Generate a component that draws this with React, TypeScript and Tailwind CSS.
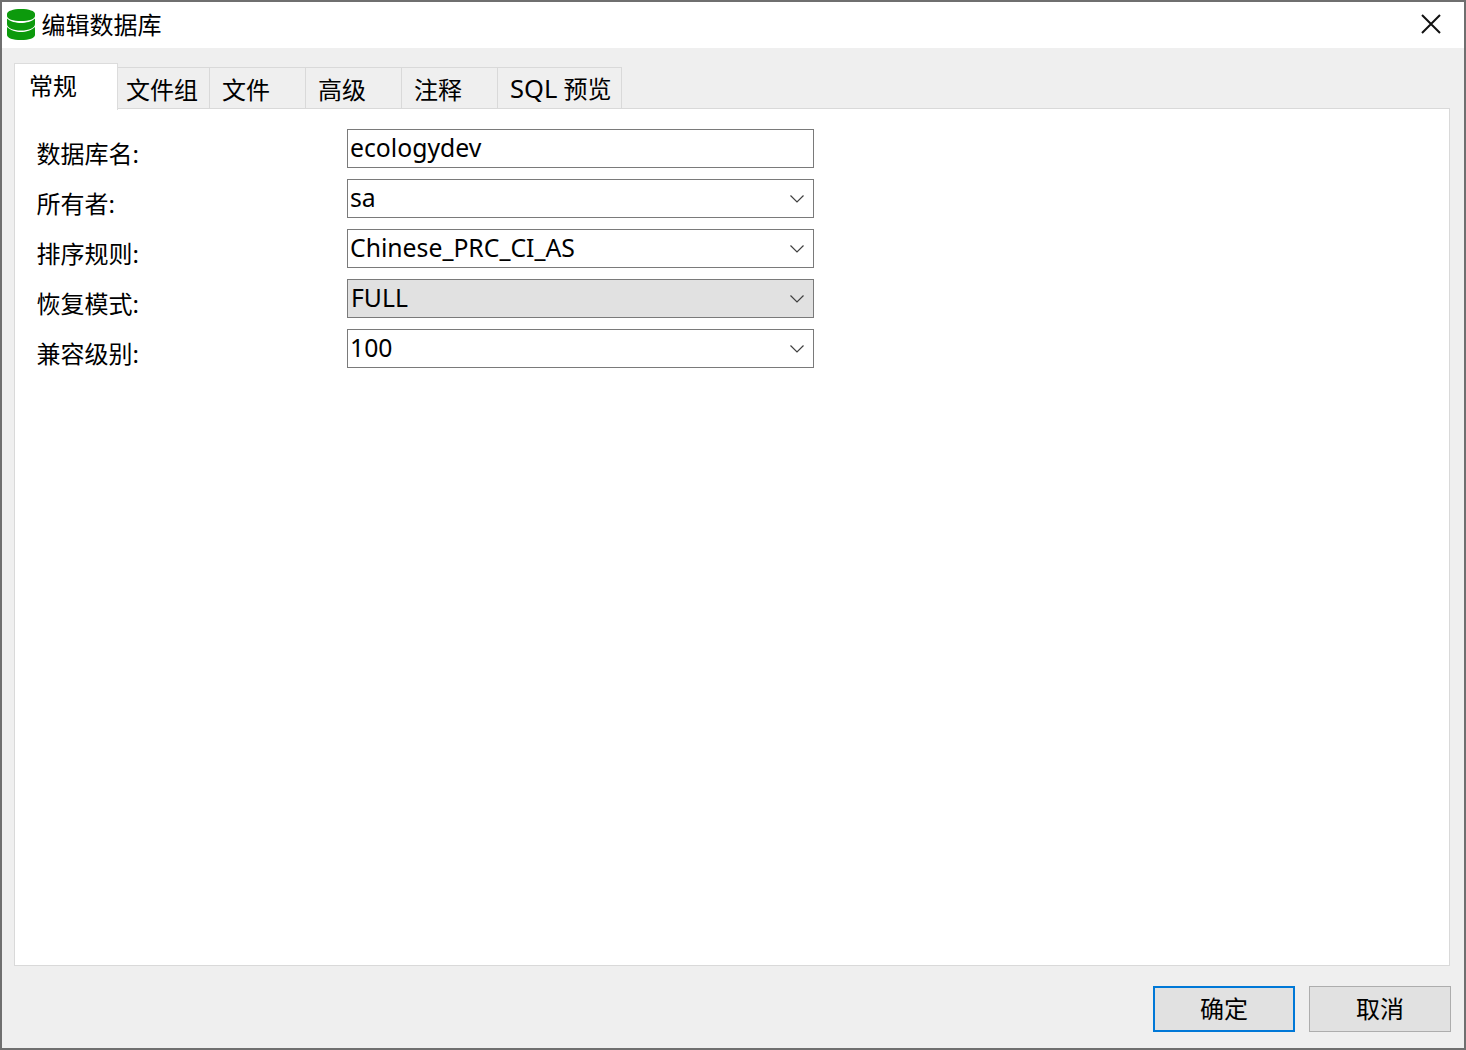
import React from "react";

const font = "font-['Noto_Sans','Noto_Sans_CJK_SC',sans-serif]";

const tabs = [
  { label: "文件组", w: "w-[92px]", pl: "pl-[8px]" },
  { label: "文件", w: "w-[96px]", pl: "pl-[12px]" },
  { label: "高级", w: "w-[96px]", pl: "pl-[12px]" },
  { label: "注释", w: "w-[96px]", pl: "pl-[12px]" },
];

const Chevron = () => (
  <svg width="16" height="10" viewBox="0 0 16 10" className="shrink-0" fill="none" stroke="#404040" strokeWidth="1.2">
    <path d="M1.5 1.5 L8 8 L14.5 1.5" />
  </svg>
);

const DbIcon = () => (
  <svg width="28" height="31" viewBox="0 0 28 31" className="shrink-0" fill="#0c9a0c">
    <path d="M0 5 C0 2 6 0 14 0 C22 0 28 2 28 5 V7 C28 10 22 12 14 12 C6 12 0 10 0 7 Z" />
    <path d="M0 9.500 C3 12.500 9 14 14 14 C19 14 25 12.500 28 9.500 V15 C28 19 22 21.500 14 21.500 C6 21.500 0 19 0 15 Z" />
    <path d="M0 18 C3 21 9 23 14 23 C19 23 25 21 28 18 V26 C28 29 22 31 14 31 C6 31 0 29 0 26 Z" />
  </svg>
);

const Field = ({ label, value, select, disabled }: { label: string; value: string; select?: boolean; disabled?: boolean }) => (
  <div className="flex items-start h-[39px]">
    <div className="w-[310px] shrink-0 text-[24px] leading-[34px] pt-[8px] text-black -ml-[0.5px] mr-[0.5px]">{label}</div>
    <div
      className={`w-[467px] h-[39px] border border-[#7a7a7a] flex items-center justify-between pr-[8px] text-[24.75px] leading-[34px] text-black ${
        disabled ? "bg-[#e1e1e1] pl-[3px]" : "bg-white pl-[2px]"
      }`}
    >
      <span className="relative -top-[1px]">{value}</span>
      {select && <Chevron />}
    </div>
  </div>
);

export default function App() {
  return (
    <div className={`w-[1466px] h-[1050px] border-2 border-[#6f6f6f] bg-[#efefef] flex flex-col overflow-hidden ${font}`}>
      <div className="h-[46px] bg-white flex items-center shrink-0">
        <div className="ml-[5px] -mt-[1px]">
          <DbIcon />
        </div>
        <span className="ml-[6.500px] -mt-[1px] text-[24px] leading-[34px] text-black">编辑数据库</span>
        <svg width="22" height="22" viewBox="0 0 22 22" className="ml-auto mr-[22px] -mt-[2px]" fill="none" stroke="#111" strokeWidth="2">
          <path d="M2 2 L20 20 M20 2 L2 20" />
        </svg>
      </div>

      <div className="pl-[12px] pt-[15px] flex items-end shrink-0 relative z-10">
        <div className="w-[104px] h-[47px] -mb-[1px] bg-white border border-b-0 border-[#dcdcdc] pl-[14px] pt-[5px] text-[24px] leading-[34px] text-black">
          常规
        </div>
        {tabs.map((t) => (
          <div
            key={t.label}
            className={`${t.w} ${t.pl} h-[42px] border-t border-r border-b border-[#d9d9d9] pt-[5px] text-[24px] leading-[34px] text-black whitespace-nowrap`}
          >
            {t.label}
          </div>
        ))}
        <div className="w-[124px] pl-[12px] h-[42px] border-t border-r border-b border-[#d9d9d9] pt-[4px] text-[24px] leading-[34px] text-black whitespace-nowrap">
          <span className="text-[25.5px] leading-none">SQL</span> 预览
        </div>
      </div>

      <div className="ml-[12px] mr-[14px] h-[858px] -mt-[1px] bg-white border border-[#d9d9d9] pl-[22px] pt-[20px] flex flex-col gap-[11px] shrink-0">
        <Field label="数据库名:" value="ecologydev" />
        <Field label="所有者:" value="sa" select />
        <Field label="排序规则:" value="Chinese_PRC_CI_AS" select />
        <Field label="恢复模式:" value="FULL" select disabled />
        <Field label="兼容级别:" value="100" select />
      </div>

      <div className="flex justify-end gap-[14px] pr-[13px] pt-[20px]">
        <button className="w-[142px] h-[46px] bg-[#e1e1e1] border-2 border-[#0078d7] text-[24px] leading-[34px] text-black">确定</button>
        <button className="w-[142px] h-[46px] bg-[#e1e1e1] border border-[#adadad] text-[24px] leading-[34px] text-black">取消</button>
      </div>
    </div>
  );
}
